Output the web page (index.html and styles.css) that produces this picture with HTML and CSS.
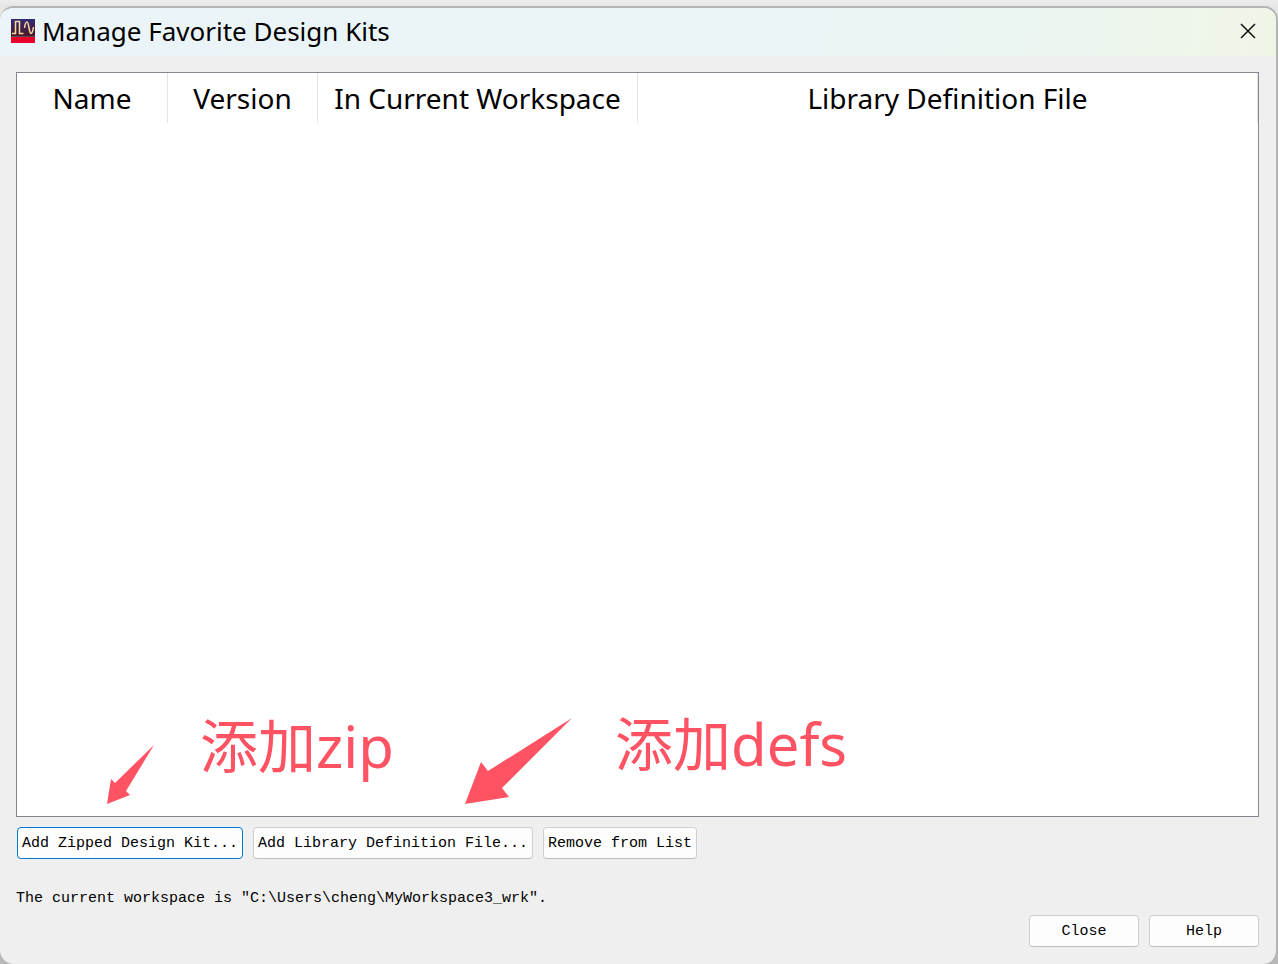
FILE: index.html
```html
<!DOCTYPE html>
<html lang="en">
<head>
    <meta charset="UTF-8">
    <meta name="viewport" content="width=device-width, initial-scale=1.0">
    <title>Manage Favorite Design Kits</title>
    <link rel="stylesheet" href="styles.css">
</head>
<body>
    <main class="dialog">
        <header class="titlebar">
            <svg class="app-icon" viewBox="0 0 24 24" aria-hidden="true">
                <defs>
                    <linearGradient id="icon-bg" x1="0" y1="0" x2="0" y2="1">
                        <stop offset="0" stop-color="#302c78"/>
                        <stop offset="0.5" stop-color="#40204a"/>
                        <stop offset="1" stop-color="#4c1a28"/>
                    </linearGradient>
                </defs>
                <rect width="24" height="17" fill="url(#icon-bg)"/>
                <rect y="17" width="24" height="1" fill="#5a5050"/>
                <rect y="18" width="24" height="6" fill="#e80028"/>
                <path d="M1 14.500H4.500V2.500H8.500V14.500H12.500" fill="none" stroke="#f6d8a0" stroke-width="1.500"/>
                <path d="M13.500 9C14 5 15 3 16 3C18 3 18 14.500 20 14.500C21.500 14.500 22 11 22.500 8" fill="none" stroke="#f6d8a0" stroke-width="1.500"/>
            </svg>
            <h1>Manage Favorite Design Kits</h1>
            <button class="close-x" type="button" aria-label="Close window">
                <svg viewBox="0 0 16 16" aria-hidden="true">
                    <path d="M1 1L15 15M15 1L1 15" fill="none" stroke="#111" stroke-width="1.500"/>
                </svg>
            </button>
        </header>

        <div class="content">
            <div class="kit-list">
                <table>
                    <thead>
                        <tr>
                            <th class="col-name">Name</th>
                            <th class="col-version">Version</th>
                            <th class="col-workspace">In Current Workspace</th>
                            <th>Library Definition File</th>
                        </tr>
                    </thead>
                    <tbody></tbody>
                </table>

                <!-- notes over the list -->
                <svg class="arrow arrow-zip" viewBox="0 0 47 59" aria-hidden="true">
                    <path d="M0 59L4 34L8 38L47 0L19 46L23 50Z"/>
                </svg>
                <span class="note note-zip" lang="zh-CN">添加zip</span>
                <svg class="arrow arrow-defs" viewBox="0 0 107 86" aria-hidden="true">
                    <path d="M0 86L16 44L23 53L107 0L37 70L44 79Z"/>
                </svg>
                <span class="note note-defs" lang="zh-CN">添加defs</span>
            </div>

            <div class="actions">
                <button class="btn btn-default" type="button">Add Zipped Design Kit...</button>
                <button class="btn" type="button">Add Library Definition File...</button>
                <button class="btn" type="button">Remove from List</button>
            </div>

            <p class="status">The current workspace is "C:\Users\cheng\MyWorkspace3_wrk".</p>

            <div class="footer">
                <button class="btn" type="button">Close</button>
                <button class="btn" type="button">Help</button>
            </div>
        </div>
    </main>
</body>
</html>
```

FILE: styles.css
```css
* {
    box-sizing: border-box;
}
body {
    margin: 0;
    padding-top: 6px;
    background: linear-gradient(#ededed, #e6e6e6 6px, #b8b8b8);
    font-family: "Noto Sans", "Open Sans", sans-serif;
    color: #000;
}
.dialog {
    display: flex;
    flex-direction: column;
    min-height: calc(100vh - 6px);
    border-top: 2px solid #b4b4b4;
    border-right: 2px solid #b4b4b4;
    border-radius: 14px;
    background-color: #efefef;
    overflow: hidden;
}
.titlebar {
    display: flex;
    align-items: center;
    gap: 7px;
    height: 48px;
    padding: 0 18px 2px 11px;
    background: linear-gradient(100deg, #ebf4f8, #e9f5f7 60%, #ebf5f1 80%, #f0f6e6);
}
.app-icon {
    width: 24px;
    height: 24px;
}
h1 {
    flex: 1;
    margin: 0;
    font-size: 26px;
    line-height: 36px;
    font-weight: normal;
}
.close-x {
    display: flex;
    padding: 2px;
    border: none;
    background: none;
}
.close-x svg {
    width: 16px;
    height: 16px;
}
.content {
    flex: 1;
    display: flex;
    flex-direction: column;
    padding: 16px 17px 17px 16px;
}
.kit-list {
    flex: 1;
    position: relative;
    border: 1px solid #828790;
    background-color: #fff;
}
table {
    width: 100%;
    table-layout: fixed;
    border-collapse: separate;
    border-spacing: 0;
}
th {
    height: 50px;
    padding: 0;
    border-right: 1px solid #e5e5e5;
    font-size: 28px;
    line-height: 48px;
    font-weight: normal;
    text-align: center;
    white-space: nowrap;
}
.col-name {
    width: 151px;
}
.col-version {
    width: 150px;
}
.col-workspace {
    width: 320px;
}
.arrow {
    position: absolute;
    bottom: 12px;
    fill: #ff5363;
}
.arrow-zip {
    left: 90px;
    width: 47px;
    height: 59px;
}
.arrow-defs {
    left: 448px;
    width: 107px;
    height: 86px;
}
.note {
    position: absolute;
    color: #ff5363;
    font-family: "Noto Sans", "Noto Sans CJK SC", sans-serif;
    font-size: 58px;
    line-height: 80px;
    white-space: nowrap;
}
.note-zip {
    left: 183px;
    bottom: 30px;
}
.note-defs {
    left: 598px;
    bottom: 32px;
}
.actions,
.footer {
    display: flex;
    gap: 10px;
}
.actions {
    margin-top: 10px;
    padding-left: 1px;
}
.btn {
    height: 32px;
    padding: 0 4px;
    border: 1px solid #d0d0d0;
    border-bottom-color: #bcbcbc;
    border-radius: 4px;
    background-color: #fdfdfd;
    color: #000;
    font-family: "Liberation Mono", monospace;
    font-size: 15px;
}
.btn-default {
    border-color: #0078d4;
}
.status {
    margin: 28px 0 4px;
    font-family: "Liberation Mono", monospace;
    font-size: 15px;
    line-height: 24px;
}
.footer {
    justify-content: flex-end;
}
.footer .btn {
    width: 110px;
}
```
